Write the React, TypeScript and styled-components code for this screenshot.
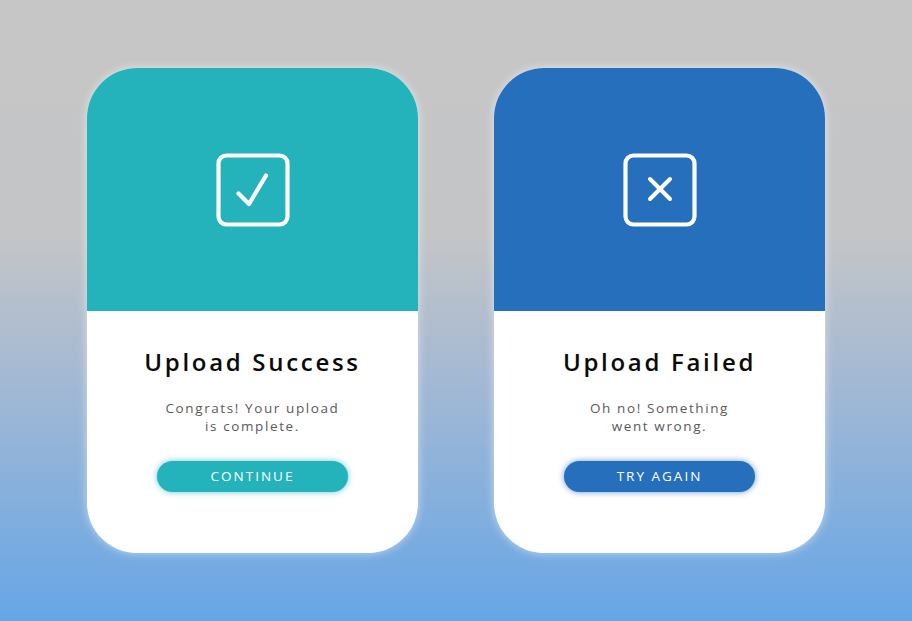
import React from "react";
import styled, { createGlobalStyle } from "styled-components";

const GlobalStyle = createGlobalStyle`
  html, body {
    margin: 0;
    padding: 0;
    height: 100%;
  }
  body {
    font-family: "Open Sans", "Liberation Sans", sans-serif;
    background: linear-gradient(180deg, #c6c6c6 0%, #c4c5c7 38%, #9cb6d6 66%, #66a6e6 100%);
  }
  #root {
    height: 100%;
  }
`;

const Page = styled.div`
  display: flex;
  align-items: center;
  justify-content: center;
  gap: 76px;
  height: 100vh;
`;

const Card = styled.div`
  display: flex;
  flex-direction: column;
  width: 331px;
  height: 485px;
  margin-top: -1px;
  background: #ffffff;
  border-radius: 50px;
  overflow: hidden;
  box-shadow: 0 0 10px rgba(255, 255, 255, 0.55);
`;

const CardHeader = styled.div<{ $color: string }>`
  display: flex;
  align-items: center;
  justify-content: center;
  height: 243px;
  flex-shrink: 0;
  background: ${(p) => p.$color};
  padding-top: 2px;
  box-sizing: border-box;
`;

const CardBody = styled.div`
  display: flex;
  flex-direction: column;
  align-items: center;
  padding-top: 34px;
`;

const Title = styled.h2`
  margin: 0;
  font-size: 24px;
  font-weight: 600;
  letter-spacing: 2.7px;
  color: #0a0a0a;
  line-height: 34px;
`;

const Message = styled.p`
  margin: 20px 0 0;
  font-size: 13.5px;
  font-weight: 400;
  line-height: 18px;
  letter-spacing: 1.6px;
  color: #5a5a5a;
  text-align: center;
  white-space: pre-line;
`;

const ActionButton = styled.button<{ $color: string; $glow: string }>`
  margin-top: 26px;
  width: 191px;
  height: 31px;
  border: none;
  border-radius: 16px;
  background: ${(p) => p.$color};
  box-shadow: 0 0 6px ${(p) => p.$glow};
  color: #ffffff;
  font-family: "Open Sans", "Liberation Sans", sans-serif;
  font-size: 13.5px;
  font-weight: 500;
  letter-spacing: 2px;
  cursor: pointer;
`;

const CheckIcon = () => (
  <svg width="74" height="74" viewBox="0 0 74 74" fill="none" stroke="#fff" strokeLinecap="round" strokeLinejoin="round">
    <rect x="2.5" y="2.5" width="69" height="69" rx="8" strokeWidth="4.2" />
    <path d="M22.5 40.5 L33 51 L50 22.5" strokeWidth="4.2" />
  </svg>
);

const CrossIcon = () => (
  <svg width="74" height="74" viewBox="0 0 74 74" fill="none" stroke="#fff" strokeLinecap="round">
    <rect x="2.5" y="2.5" width="69" height="69" rx="8" strokeWidth="4.2" />
    <path d="M27 26 L47 46 M47 26 L27 46" strokeWidth="4" />
  </svg>
);

interface StatusCardProps {
  color: string;
  glow: string;
  icon: React.ReactNode;
  title: string;
  message: string;
  action: string;
}

const StatusCard = ({ color, glow, icon, title, message, action }: StatusCardProps) => (
  <Card>
    <CardHeader $color={color}>{icon}</CardHeader>
    <CardBody>
      <Title>{title}</Title>
      <Message>{message}</Message>
      <ActionButton $color={color} $glow={glow}>
        {action}
      </ActionButton>
    </CardBody>
  </Card>
);

const App = () => (
  <>
    <GlobalStyle />
    <Page>
      <StatusCard
        color="#24b2bb"
        glow="rgba(36, 178, 187, 0.7)"
        icon={<CheckIcon />}
        title="Upload Success"
        message={"Congrats! Your upload\nis complete."}
        action="CONTINUE"
      />
      <StatusCard
        color="#266fbc"
        glow="rgba(38, 111, 188, 0.7)"
        icon={<CrossIcon />}
        title="Upload Failed"
        message={"Oh no! Something\nwent wrong."}
        action="TRY AGAIN"
      />
    </Page>
  </>
);

export default App;
